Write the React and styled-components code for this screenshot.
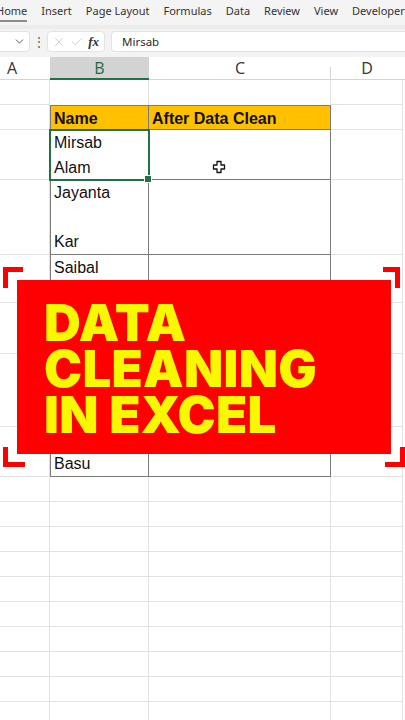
import React from 'react';
import styled, { createGlobalStyle } from 'styled-components';
import { X, Check, ChevronDown } from 'lucide-react';

const GlobalStyle = createGlobalStyle`
  html, body {
    margin: 0;
    padding: 0;
    background: #ffffff;
    overflow: hidden;
  }
  * { box-sizing: border-box; }
`;

const COLS = '50px 99px 182px 72px';

// 화면 전체
const Screen = styled.div`
  position: relative;
  width: 405px;
  height: 720px;
  overflow: hidden;
  background: #ffffff;
  font-family: 'Noto Sans', 'Open Sans', sans-serif;
`;

// 리본 탭
const TabBar = styled.div`
  height: 29px;
  display: flex;
  align-items: flex-start;
  gap: 14px;
  margin-left: -4px;
  background: #f4f4f4;
  border-bottom: 4px solid #ececec;
`;

const Tab = styled.div`
  position: relative;
  padding-top: 3px;
  font-size: 11px;
  line-height: 16px;
  color: #333;
  white-space: nowrap;
  &::after {
    content: '';
    position: absolute;
    left: 0;
    right: 0;
    top: 20px;
    height: 1.5px;
    background: ${(p) => (p.$active ? '#8c8c8c' : 'transparent')};
  }
`;

// 수식 입력줄
const FormulaBar = styled.div`
  height: 28px;
  display: flex;
  align-items: flex-start;
  padding-top: 2px;
  background: #f3f3f3;
`;

const NameBox = styled.div`
  width: 30px;
  height: 21px;
  display: flex;
  align-items: center;
  justify-content: flex-end;
  padding-right: 3px;
  background: #ffffff;
  border: 1px solid #e3e3e3;
  border-left: none;
  border-radius: 0 4px 4px 0;
  color: #444;
`;

const Dots = styled.div`
  width: 17px;
  text-align: center;
  font-size: 12px;
  line-height: 21px;
  color: #555;
`;

const FxBox = styled.div`
  width: 58px;
  height: 21px;
  display: flex;
  align-items: center;
  justify-content: space-between;
  padding: 0 5px 0 4px;
  background: #ffffff;
  border: 1px solid #e3e3e3;
  border-radius: 4px;
  color: #c2c2c2;
`;

const Fx = styled.span`
  font-family: 'Liberation Serif', 'DejaVu Serif', serif;
  font-style: italic;
  font-weight: 700;
  font-size: 13px;
  color: #333;
`;

const FormulaInput = styled.div`
  flex: 1;
  height: 21px;
  margin-left: 6px;
  padding-left: 10px;
  background: #ffffff;
  border: 1px solid #e3e3e3;
  border-right: none;
  border-radius: 4px 0 0 4px;
  font-size: 11.5px;
  line-height: 19px;
  color: #2b2b2b;
`;

// 열 머리글
const HeaderRow = styled.div`
  height: 23px;
  display: grid;
  grid-template-columns: ${COLS};
  background: #ffffff;
  border-bottom: 1px solid #d4d4d4;
`;

const ColHead = styled.div`
  position: relative;
  height: 23px;
  text-align: center;
  padding-right: ${(p) => p.$shift || 0}px;
  font-family: 'Open Sans', 'Noto Sans', sans-serif;
  font-size: 16px;
  line-height: 23px;
  color: ${(p) => (p.$active ? '#1e6b3f' : '#333')};
  background: ${(p) => (p.$active ? '#d3d3d3' : 'transparent')};
  border-bottom: ${(p) => (p.$active ? '2px solid #217346' : 'none')};
  &::after {
    content: '';
    position: absolute;
    right: 0;
    bottom: 0;
    width: 1px;
    height: 13px;
    background: ${(p) => (p.$sep ? '#d4d4d4' : 'transparent')};
  }
`;

// 시트
const Sheet = styled.div`
  display: grid;
  grid-template-columns: ${COLS};
  grid-template-rows: 25px 25px 50px 75px 48px 51px 73px 50px repeat(10, 25px);
  width: 403px;
  border-right: 1px solid #c8c8c8;
`;

const Cell = styled.div`
  position: relative;
  grid-row: span ${(p) => p.$span || 1};
  border-right: 1px solid #e1e1e1;
  border-bottom: ${(p) => (p.$open ? 'none' : '1px solid #e1e1e1')};
`;

const TableCell = styled.div`
  position: relative;
  grid-row: span ${(p) => p.$span || 1};
  display: flex;
  flex-direction: column;
  justify-content: ${(p) => (p.$spread ? 'space-between' : 'flex-start')};
  padding: 0 3px;
  font-family: 'Liberation Sans', Arial, sans-serif;
  font-size: 16px;
  line-height: 25px;
  color: #111;
  font-weight: ${(p) => (p.$head ? 700 : 400)};
  background: ${(p) => (p.$head ? '#ffc000' : '#ffffff')};
  border-right: 1px solid #7b7b7b;
  border-bottom: 1px solid #7b7b7b;
  border-top: ${(p) => (p.$head ? '1px solid #7b7b7b' : 'none')};
  border-left: ${(p) => (p.$first ? '1px solid #7b7b7b' : 'none')};
  outline: ${(p) => (p.$selected ? '2px solid #217346' : 'none')};
  outline-offset: -1px;
  z-index: ${(p) => (p.$selected ? 1 : 0)};
  &::after {
    content: '';
    display: ${(p) => (p.$selected ? 'block' : 'none')};
    position: absolute;
    right: -4px;
    bottom: -4px;
    width: 6px;
    height: 6px;
    background: #217346;
    border: 1px solid #ffffff;
  }
`;

// 배너
const Banner = styled.div`
  position: absolute;
  left: 17px;
  top: 280px;
  width: 374px;
  height: 174px;
  padding: 20px 0 0 27px;
  background: #fe0000;
  z-index: 5;
`;

const BannerText = styled.div`
  font-family: 'Inter', 'Liberation Sans', sans-serif;
  font-weight: 900;
  font-size: 51px;
  line-height: 46px;
  letter-spacing: 0.3px;
  color: #f8f800;
  white-space: nowrap;
`;

const Bracket = styled.div`
  position: absolute;
  left: ${(p) => p.$x}px;
  top: ${(p) => p.$y}px;
  width: ${(p) => p.$w}px;
  height: ${(p) => p.$h}px;
  border: 0 solid #fe0000;
  ${(p) => (p.$top ? 'border-top-width: 5px;' : 'border-bottom-width: 5px;')}
  ${(p) => (p.$left ? 'border-left-width: 5px;' : 'border-right-width: 5px;')}
  z-index: 5;
`;

const Cursor = styled.svg`
  position: absolute;
  left: 212px;
  top: 160px;
  z-index: 4;
`;

const tabs = ['Home', 'Insert', 'Page Layout', 'Formulas', 'Data', 'Review', 'View', 'Developer'];

const GridRow = ({ open }) => (
  <>
    <Cell />
    <Cell $open={open} />
    <Cell $open={open} />
    <Cell />
  </>
);

export default function App() {
  return (
    <Screen>
      <GlobalStyle />
      <TabBar>
        {tabs.map((t, i) => (
          <Tab key={t} $active={i === 0}>{t}</Tab>
        ))}
      </TabBar>

      <FormulaBar>
        <NameBox>
          <ChevronDown size={13} strokeWidth={1.6} />
        </NameBox>
        <Dots>⋮</Dots>
        <FxBox>
          <X size={14} strokeWidth={1.3} />
          <Check size={14} strokeWidth={1.3} />
          <Fx>fx</Fx>
        </FxBox>
        <FormulaInput>Mirsab</FormulaInput>
      </FormulaBar>

      <HeaderRow>
        <ColHead $shift={26}>A</ColHead>
        <ColHead $active>B</ColHead>
        <ColHead $sep>C</ColHead>
        <ColHead $shift={-8}>D</ColHead>
      </HeaderRow>

      <Sheet>
        <GridRow open />

        <Cell />
        <TableCell $head $first>Name</TableCell>
        <TableCell $head>After Data Clean</TableCell>
        <Cell />

        <Cell />
        <TableCell $first $selected>
          <span>Mirsab</span>
          <span>Alam</span>
        </TableCell>
        <TableCell />
        <Cell />

        <Cell />
        <TableCell $first $spread>
          <span>Jayanta</span>
          <span>Kar</span>
        </TableCell>
        <TableCell />
        <Cell />

        <Cell />
        <TableCell $first $spread $span={4}>
          <span>Saibal</span>
          <span>Basu</span>
        </TableCell>
        <TableCell $span={4} />
        <Cell />
        <Cell />
        <Cell />
        <Cell />
        <Cell />
        <Cell />
        <Cell />

        {Array.from({ length: 10 }).map((_, i) => (
          <GridRow key={i} />
        ))}
      </Sheet>

      <Cursor width="14" height="14" viewBox="0 0 14 14">
        <path
          d="M5 1.5h4v3.5h3.5v4H9v3.5H5V9H1.5V5H5z"
          fill="#ffffff"
          stroke="#111"
          strokeWidth="1.3"
          strokeLinejoin="round"
        />
      </Cursor>

      <Bracket $x={3} $y={267} $w={20} $h={21} $top $left />
      <Bracket $x={383} $y={267} $w={17} $h={21} $top />
      <Bracket $x={3} $y={447} $w={22} $h={20} $left />
      <Bracket $x={385} $y={447} $w={20} $h={20} />

      <Banner>
        <BannerText>DATA</BannerText>
        <BannerText>CLEANING</BannerText>
        <BannerText>IN EXCEL</BannerText>
      </Banner>
    </Screen>
  );
}
